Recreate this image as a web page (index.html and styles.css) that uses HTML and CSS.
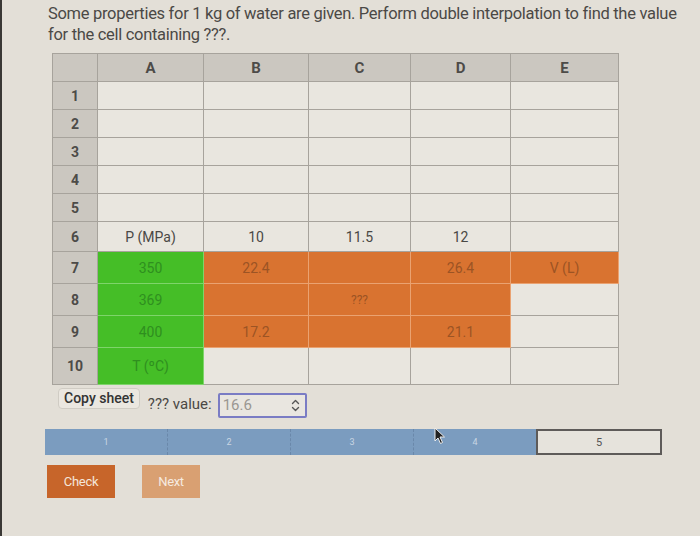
FILE: index.html
```html
<!DOCTYPE html>
<html lang="en">
<head>
  <meta charset="UTF-8">
  <meta name="viewport" content="width=device-width, initial-scale=1.0">
  <title>Double Interpolation</title>
  <link rel="stylesheet" href="styles.css">
</head>
<body>
  <div class="page">
    <p class="question">Some properties for 1 kg of water are given. Perform double interpolation to find the value for the cell containing ???.</p>

    <table class="sheet">
      <thead>
        <tr>
          <th class="corner"></th>
          <th class="col-a">A</th>
          <th class="col-b">B</th>
          <th class="col-c">C</th>
          <th class="col-d">D</th>
          <th class="col-e">E</th>
        </tr>
      </thead>
      <tbody>
        <tr><th>1</th><td></td><td></td><td></td><td></td><td></td></tr>
        <tr><th>2</th><td></td><td></td><td></td><td></td><td></td></tr>
        <tr><th>3</th><td></td><td></td><td></td><td></td><td></td></tr>
        <tr><th>4</th><td></td><td></td><td></td><td></td><td></td></tr>
        <tr><th>5</th><td></td><td></td><td></td><td></td><td></td></tr>
        <tr class="labels"><th>6</th><td>P (MPa)</td><td>10</td><td>11.5</td><td>12</td><td></td></tr>
        <tr class="data">
          <th>7</th>
          <td class="green">350</td>
          <td class="orange">22.4</td>
          <td class="orange"></td>
          <td class="orange">26.4</td>
          <td class="orange">V (L)</td>
        </tr>
        <tr class="data">
          <th>8</th>
          <td class="green">369</td>
          <td class="orange"></td>
          <td class="orange unknown">???</td>
          <td class="orange"></td>
          <td></td>
        </tr>
        <tr class="data">
          <th>9</th>
          <td class="green">400</td>
          <td class="orange">17.2</td>
          <td class="orange"></td>
          <td class="orange">21.1</td>
          <td></td>
        </tr>
        <tr class="last">
          <th>10</th>
          <td class="green">T (&ordm;C)</td>
          <td></td><td></td><td></td><td></td>
        </tr>
      </tbody>
    </table>

    <div class="answer-row">
      <button class="copy-btn">Copy sheet</button>
      <label class="answer-label" for="answer">??? value:</label>
      <div class="answer-box">
        <span id="answer" class="answer-value">16.6</span>
        <svg class="spinner" width="9" height="13" viewBox="0 0 9 13" fill="none" stroke="#555" stroke-width="1.4" stroke-linecap="round" stroke-linejoin="round">
          <polyline points="1.5 4.5 4.5 1.5 7.5 4.5"></polyline>
          <polyline points="1.5 8.5 4.5 11.5 7.5 8.5"></polyline>
        </svg>
      </div>
    </div>

    <div class="progress">
      <div class="step done">1</div>
      <div class="step done">2</div>
      <div class="step done">3</div>
      <div class="step done">4</div>
      <div class="step current">5</div>
      <svg class="cursor" width="12" height="18" viewBox="0 0 12 18">
        <path d="M1 1 L1 14 L4 11 L6.5 16.5 L8.5 15.5 L6 10 L10.5 10 Z" fill="#222" stroke="#eee" stroke-width="1"></path>
      </svg>
    </div>

    <div class="actions">
      <button class="check-btn">Check</button>
      <button class="next-btn">Next</button>
    </div>
  </div>
</body>
</html>
```

FILE: styles.css
```css
:root {
  --page-bg: #e3dfd7;
  --cell-bg: #e9e6df;
  --head-bg: #cbc7c0;
  --grid-line: #a7a39c;
  --text: #4a4845;
  --green: #45be27;
  --green-text: #2f8f1f;
  --orange: #d97330;
  --orange-line: #eaa271;
  --orange-text: #9c5424;
  --blue: #7b9cbf;
}

* {
  margin: 0;
  padding: 0;
  box-sizing: border-box;
}

body {
  font-family: Roboto, 'Liberation Sans', sans-serif;
  color: var(--text);
  background-color: var(--page-bg);
  border-left: 2px solid #3a3835;
  height: 536px;
  overflow: hidden;
}

.page {
  padding: 3px 0 0 46px;
}

.question {
  width: 630px;
  font-size: 16.5px;
  line-height: 21px;
  letter-spacing: -0.3px;
  color: #4b4946;
}

.sheet {
  margin: 8px 0 0 4px;
  border-collapse: collapse;
  font-size: 14px;
  table-layout: fixed;
  width: 566px;
}

.sheet th,
.sheet td {
  border: 1px solid var(--grid-line);
  text-align: center;
  height: 28px;
  font-weight: 400;
}

.sheet th {
  background-color: var(--head-bg);
  font-weight: 700;
  color: #4d4b48;
  width: 45px;
}

.sheet thead th {
  height: 28px;
  font-size: 15px;
}

.sheet .col-a { width: 106px; }
.sheet .col-b { width: 105px; }
.sheet .col-c { width: 102px; }
.sheet .col-d { width: 100px; }
.sheet .col-e { width: 108px; }

.sheet td {
  background-color: var(--cell-bg);
  color: #4a4845;
}

.sheet tr.labels th,
.sheet tr.labels td {
  height: 30px;
}

.sheet tr.data th,
.sheet tr.data td {
  height: 32px;
}

.sheet tr.last th,
.sheet tr.last td {
  height: 37px;
}

.sheet td.green {
  background-color: var(--green);
  color: var(--green-text);
  border-color: #7ed46a;
}

.sheet td.orange {
  background-color: var(--orange);
  color: var(--orange-text);
  border-color: var(--orange-line);
}

.sheet td.unknown {
  font-size: 12px;
}

.answer-row {
  display: flex;
  align-items: center;
  gap: 6px;
  margin: 1px 0 0 10px;
  height: 32px;
}

.copy-btn {
  font-family: Roboto, 'Liberation Sans', sans-serif;
  font-size: 14px;
  font-weight: 500;
  color: #333;
  background-color: #ebe7e0;
  border: 1px solid #d0ccc4;
  border-radius: 4px;
  padding: 1px 5px;
  height: 21px;
  margin-top: -8px;
  margin-right: 2px;
}

.answer-label {
  font-size: 15px;
  color: #4a4845;
  margin-top: 4px;
}

.answer-box {
  width: 89px;
  height: 25px;
  border: 2px solid #7a7cc4;
  border-radius: 2px;
  background-color: #e9e6e0;
  display: flex;
  align-items: center;
  justify-content: space-between;
  padding: 0 5px 0 3px;
  margin-top: 6px;
}

.answer-value {
  font-size: 15px;
  color: #9a9792;
}

.progress {
  position: relative;
  display: flex;
  margin: 11px 0 0 -3px;
  width: 617px;
  height: 26px;
}

.step {
  flex: 1;
  display: flex;
  align-items: center;
  justify-content: center;
  font-size: 9px;
  color: #c9d6e3;
}

.step.done {
  background-color: var(--blue);
  border-left: 1px dashed #6a88aa;
}

.step.done:first-child {
  border-left: none;
}

.step.current {
  background-color: #e6e3dc;
  border: 2px solid #5e5b59;
  color: #555;
  font-size: 11px;
}

.cursor {
  position: absolute;
  left: 389px;
  top: -2px;
}

.actions {
  display: flex;
  gap: 27px;
  margin: 10px 0 0 -1px;
}

.check-btn,
.next-btn {
  font-family: Roboto, 'Liberation Sans', sans-serif;
  font-size: 13px;
  letter-spacing: -0.3px;
  color: #f4e6da;
  border: none;
  height: 33px;
}

.check-btn {
  width: 68px;
  background-color: #c7652a;
}

.next-btn {
  width: 58px;
  background-color: #d9a072;
  color: #f6ebe0;
}
```
